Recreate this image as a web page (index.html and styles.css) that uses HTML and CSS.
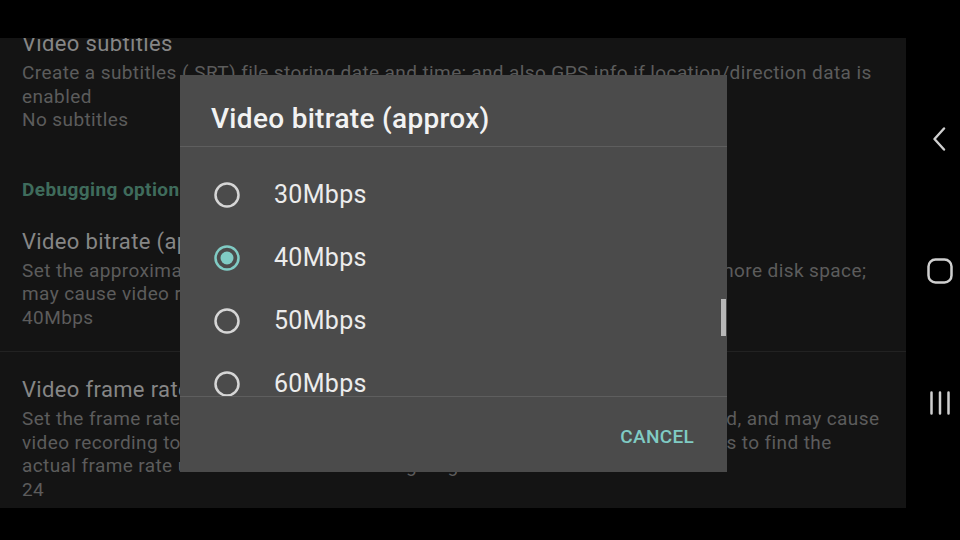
FILE: index.html
```html
<!DOCTYPE html>
<html lang="en">
<head>
    <meta charset="UTF-8">
    <meta name="viewport" content="width=device-width, initial-scale=1.0">
    <title>Video settings</title>
    <link rel="stylesheet" href="styles.css">
</head>
<body>

    <div class="phone">
        <div class="screen">

            <div class="prefs">
                <div class="pref first">
                    <div class="pref-title">Video subtitles</div>
                    <div class="pref-summary">Create a subtitles (.SRT) file storing date and time; and also GPS info if location/direction data is<br>enabled<br>No subtitles</div>
                </div>

                <div class="category">Debugging options</div>

                <div class="pref divided">
                    <div class="pref-title">Video bitrate (approx)</div>
                    <div class="pref-summary">Set the approximate video bitrate (higher values give better quality, but take up more disk space;<br>may cause video recording to fail if not supported)<br>40Mbps</div>
                </div>

                <div class="pref">
                    <div class="pref-title">Video frame rate (approx)</div>
                    <div class="pref-summary">Set the frame rate for video. This is only a hint; it may be limited by camera speed, and may cause<br>video recording to fail. The actual frame rate may differ; try using third party apps to find the<br>actual frame rate used. Note that this setting is ignored for slow motion videos.<br>24</div>
                </div>
            </div>

            <!-- the dialog sits over the settings list -->
            <div class="dialog">
                <div class="dialog-title">Video bitrate (approx)</div>
                <div class="dialog-list">
                    <div class="option">
                        <svg class="radio" width="28" height="28" viewBox="0 0 28 28"><circle cx="14" cy="14" r="11.5" fill="none" stroke="#d6d6d6" stroke-width="2.5"/></svg>
                        <span>30Mbps</span>
                    </div>
                    <div class="option">
                        <svg class="radio" width="28" height="28" viewBox="0 0 28 28"><circle cx="14" cy="14" r="11.5" fill="none" stroke="#80cbc4" stroke-width="2.5"/><circle cx="14" cy="14" r="6.5" fill="#80cbc4"/></svg>
                        <span>40Mbps</span>
                    </div>
                    <div class="option">
                        <svg class="radio" width="28" height="28" viewBox="0 0 28 28"><circle cx="14" cy="14" r="11.5" fill="none" stroke="#d6d6d6" stroke-width="2.5"/></svg>
                        <span>50Mbps</span>
                    </div>
                    <div class="option">
                        <svg class="radio" width="28" height="28" viewBox="0 0 28 28"><circle cx="14" cy="14" r="11.5" fill="none" stroke="#d6d6d6" stroke-width="2.5"/></svg>
                        <span>60Mbps</span>
                    </div>
                    <div class="option">
                        <svg class="radio" width="28" height="28" viewBox="0 0 28 28"><circle cx="14" cy="14" r="11.5" fill="none" stroke="#d6d6d6" stroke-width="2.5"/></svg>
                        <span>80Mbps</span>
                    </div>
                    <div class="scrollbar"></div>
                </div>
                <div class="dialog-actions">
                    <button class="text-btn">CANCEL</button>
                </div>
            </div>

        </div>

        <div class="navbar">
            <svg width="24" height="24" viewBox="0 0 24 24"><polyline points="16,1.5 6.5,12 16,22.5" fill="none" stroke="#cfcfcf" stroke-width="2.4" stroke-linecap="round" stroke-linejoin="round"/></svg>
            <svg width="26" height="26" viewBox="0 0 26 26"><rect x="1.5" y="1.5" width="23" height="23" rx="7" fill="none" stroke="#cfcfcf" stroke-width="2.5"/></svg>
            <svg width="24" height="24" viewBox="0 0 24 24"><path d="M3.5 1.5v21M12 1.5v21M20.5 1.5v21" fill="none" stroke="#cfcfcf" stroke-width="2.5" stroke-linecap="round"/></svg>
        </div>
    </div>

</body>
</html>
```

FILE: styles.css
```css
*{
    padding: 0;
    margin: 0;
    box-sizing: border-box;
}

body {
    background-color: #000;
    font-family: Roboto, "Liberation Sans", sans-serif;
    width: 960px;
    height: 540px;
    overflow: hidden;
}

.phone {
    display: flex;
    margin-top: 38px;
    height: 470px;
}

.screen {
    position: relative;
    width: 906px;
    height: 470px;
    background-color: #141414;
    overflow: hidden;
}

.prefs {
    display: flex;
    flex-direction: column;
}

.pref {
    padding: 24px 22px 22px 22px;
}

.pref.first {
    margin-top: -32px;
    padding-bottom: 46px;
}

.pref.divided {
    padding-top: 26px;
    border-bottom: 1px solid #222;
}

.pref-title {
    font-size: 22px;
    line-height: 28px;
    letter-spacing: 0.35px;
    color: #868686;
    margin-bottom: 3px;
}

.pref-summary {
    font-size: 19px;
    line-height: 23.5px;
    letter-spacing: 0.4px;
    color: #5c5c5c;
    white-space: nowrap;
}

.category {
    padding: 0 22px;
    font-size: 19px;
    line-height: 24px;
    letter-spacing: 0.4px;
    font-weight: bold;
    color: #3f6c5c;
}

.dialog {
    position: absolute;
    left: 180px;
    top: 37px;
    width: 547px;
    height: 397px;
    background-color: #4b4b4b;
    display: flex;
    flex-direction: column;
}

.dialog-title {
    padding: 28px 31px 11px 31px;
    font-size: 28px;
    line-height: 32px;
    letter-spacing: 0.3px;
    font-weight: 500;
    color: #f2f2f2;
    border-bottom: 1px solid #5e5e5e;
}

.dialog-list {
    position: relative;
    height: 250px;
    padding-top: 16px;
    overflow: hidden;
    border-bottom: 1px solid #5e5e5e;
}

.option {
    display: flex;
    align-items: center;
    height: 63px;
    padding-left: 33px;
    gap: 33px;
    font-size: 25px;
    letter-spacing: 0.3px;
    color: #ececec;
}

.radio {
    flex-shrink: 0;
}

.scrollbar {
    position: absolute;
    right: 1px;
    top: 152px;
    width: 5px;
    height: 37px;
    background-color: #b8b8b8;
}

.dialog-actions {
    flex: 1;
    display: flex;
    justify-content: flex-end;
    align-items: center;
    padding-right: 33px;
    padding-top: 4px;
}

.text-btn {
    background: none;
    border: none;
    font-family: Roboto, "Liberation Sans", sans-serif;
    font-size: 19px;
    font-weight: 500;
    color: #80cbc4;
    letter-spacing: 0.3px;
}

.navbar {
    width: 54px;
    display: flex;
    flex-direction: column;
    align-items: center;
    gap: 107px;
    padding: 89px 0 0 14px;
}
```
